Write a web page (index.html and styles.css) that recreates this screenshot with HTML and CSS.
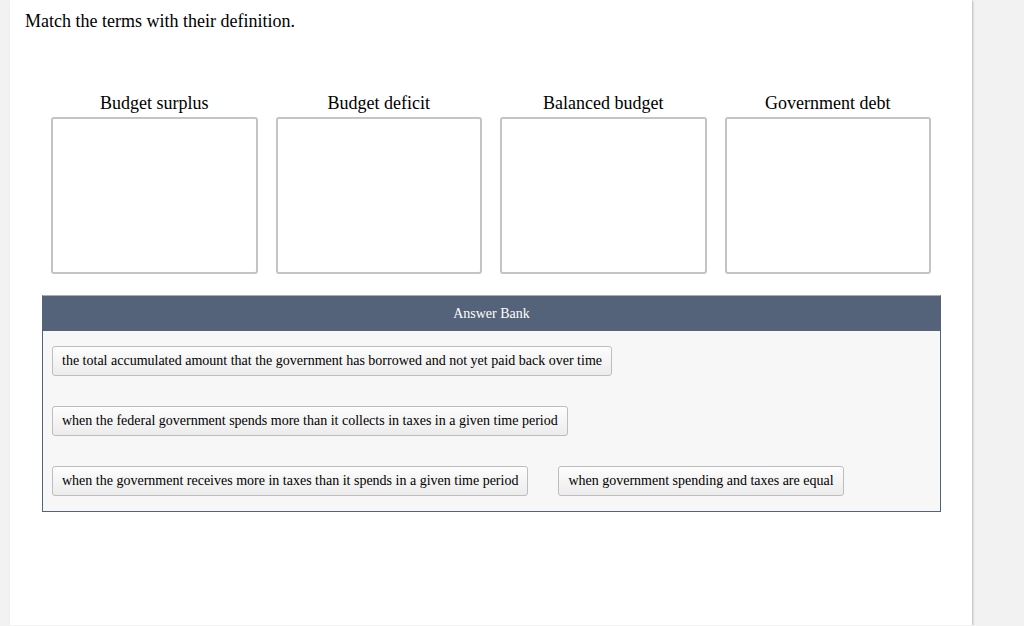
FILE: index.html
```html
<!DOCTYPE html>
<html lang="en">
<head>
    <meta charset="UTF-8">
    <title>Match the terms</title>
    <link rel="stylesheet" href="styles.css">
</head>
<body>
    <div class="page">
        <p class="prompt">Match the terms with their definition.</p>

        <div class="targets">
            <div class="target">
                <div class="target-label">Budget surplus</div>
                <div class="drop-box"></div>
            </div>
            <div class="target">
                <div class="target-label">Budget deficit</div>
                <div class="drop-box"></div>
            </div>
            <div class="target">
                <div class="target-label">Balanced budget</div>
                <div class="drop-box"></div>
            </div>
            <div class="target">
                <div class="target-label">Government debt</div>
                <div class="drop-box"></div>
            </div>
        </div>

        <div class="bank">
            <div class="bank-header">Answer Bank</div>
            <div class="bank-items">
                <div class="chip">the total accumulated amount that the government has borrowed and not yet paid back over time</div>
                <div class="chip">when the federal government spends more than it collects in taxes in a given time period</div>
                <div class="chip">when the government receives more in taxes than it spends in a given time period</div>
                <div class="chip">when government spending and taxes are equal</div>
            </div>
        </div>
    </div>
</body>
</html>
```

FILE: styles.css
```css
body {
    margin: 0;
    background-color: #f2f2f2;
    font-family: "Liberation Serif", "Times New Roman", serif;
    color: #000;
}
.page {
    margin-left: 10px;
    width: 962px;
    height: 625px;
    box-sizing: border-box;
    background-color: #fff;
    box-shadow: 1px 1px 2px rgba(0,0,0,0.25);
    padding: 11px 0 0 15px;
}
.prompt {
    margin: 0;
    font-size: 18px;
    line-height: 21px;
}
.targets {
    display: flex;
    gap: 18px;
    width: 880px;
    margin: 61px 0 0 26px;
}
.target {
    flex: 1;
}
.target-label {
    text-align: center;
    font-size: 18px;
    line-height: 20px;
    margin-bottom: 4px;
}
.drop-box {
    height: 157px;
    box-sizing: border-box;
    border: 2px solid #c4c4c4;
    border-radius: 3px;
}
.bank {
    margin: 21px 0 0 17px;
    width: 899px;
    box-sizing: border-box;
    border: 1px solid #54627a;
    border-top: 1px solid #a8adb7;
    background-color: #f7f7f7;
}
.bank-header {
    background-color: #54637a;
    color: #fff;
    text-align: center;
    font-size: 14px;
    height: 35px;
    line-height: 35px;
}
.bank-items {
    display: flex;
    flex-wrap: wrap;
    gap: 30px;
    padding: 15px 9px 15px 9px;
}
.chip {
    height: 30px;
    line-height: 28px;
    box-sizing: border-box;
    padding: 0 9px;
    font-size: 14px;
    white-space: nowrap;
    border: 1px solid #bdbdbd;
    border-radius: 3px;
    background: linear-gradient(#fdfdfd, #ececec);
}
```
